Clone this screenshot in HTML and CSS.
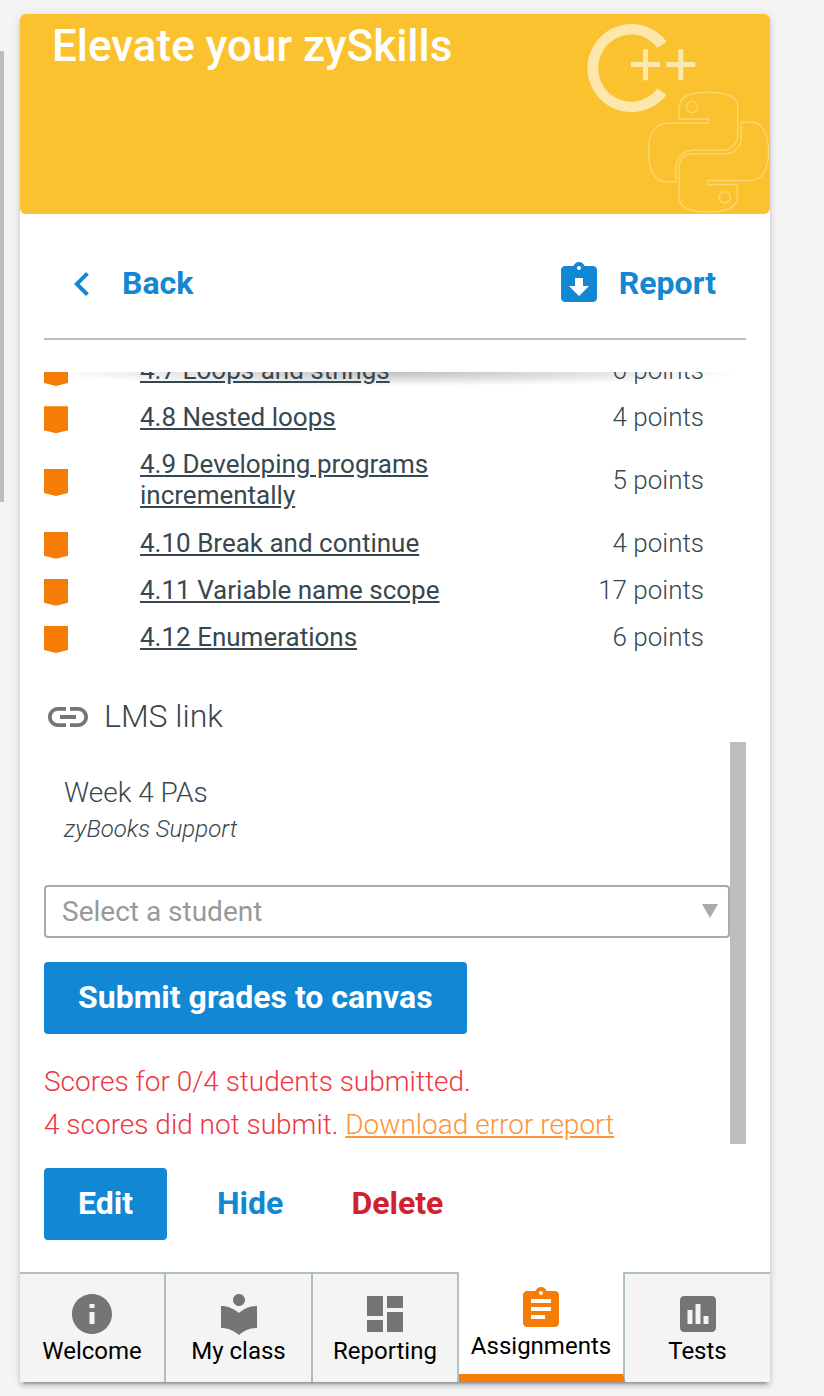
FILE: index.html
```html
<!DOCTYPE html>
<html lang="en">
<head>
  <meta charset="UTF-8">
  <meta name="viewport" content="width=device-width, initial-scale=1.0">
  <title>Assignments</title>
  <link rel="stylesheet" href="styles.css">
</head>
<body>
  <div class="page-scrollbar"></div>
  <div class="card">
    <div class="banner">
      <h1>Elevate your zySkills</h1>
      <svg class="banner-art" viewBox="560 14 210 200">
        <g fill="#fee7ac">
          <path d="M666.7 41.7A44 44 0 1 0 666.5 94.7L657.5 88.5A33 33.7 0 1 1 657.5 47.8Z"/>
          <path d="M643 49.3h5v12.7h12v5h-12v13.3h-5V67h-12v-5h12z"/>
          <path d="M678.3 49.3h5v12.7h12v5h-12v13.3h-5V67h-12v-5h12z"/>
        </g>
        <g fill="none" stroke="#fdd670" stroke-width="1.4">
          <path d="M679.3 119V107C679.3 96 692 92.3 708 92.3S737.7 96 737.7 107V135C737.7 144 731 150.3 722 150.3H694C684 150.3 675.7 158 675.7 168V181.7H665C654 181.7 648.4 168 648.4 152C648.4 135 654 123.3 667 123.3H708.7V119Z"/>
          <path d="M741.2 122.3H752C762 122.3 768.6 135 768.6 152C768.6 168 762 180.5 751 180.5H707.7V184.5H737.2V198C737.2 207 726 212 708 212S679 207 679 197V168C679 159 685 153.8 694 153.8H725C735 153.8 741.2 147 741.2 138Z"/>
          <circle cx="692" cy="107" r="5.6"/>
          <circle cx="724.7" cy="197.3" r="5.6"/>
        </g>
      </svg>
    </div>
    <div class="toolbar">
      <button class="link-button">
        <svg class="icon" viewBox="0 0 24 24"><path d="M15.41 7.41L14 6l-6 6 6 6 1.41-1.41L10.83 12z"/></svg>
        <span>Back</span>
      </button>
      <button class="link-button">
        <svg class="icon" viewBox="0 0 24 24"><path d="M19 3h-4.18C14.4 1.84 13.3 1 12 1c-1.3 0-2.4.84-2.82 2H5c-1.1 0-2 .9-2 2v14c0 1.1.9 2 2 2h14c1.1 0 2-.9 2-2V5c0-1.1-.9-2-2-2zm-7 0c.55 0 1 .45 1 1s-.45 1-1 1-1-.45-1-1 .45-1 1-1zm0 15l-5-5h3V9h4v4h3l-5 5z"/></svg>
        <span>Report</span>
      </button>
    </div>
    <div class="assignment">
      <div class="assignment-content">
        <div class="section-row"><i class="flag"></i><a>4.7 Loops and strings</a><span class="points">6 points</span></div>
        <div class="section-row"><i class="flag"></i><a>4.8 Nested loops</a><span class="points">4 points</span></div>
        <div class="section-row"><i class="flag"></i><a>4.9 Developing programs incrementally</a><span class="points">5 points</span></div>
        <div class="section-row"><i class="flag"></i><a>4.10 Break and continue</a><span class="points">4 points</span></div>
        <div class="section-row"><i class="flag"></i><a>4.11 Variable name scope</a><span class="points">17 points</span></div>
        <div class="section-row"><i class="flag"></i><a>4.12 Enumerations</a><span class="points">6 points</span></div>
        <div class="lms-title">
          <svg class="icon" viewBox="0 0 24 24"><path d="M3.9 12c0-1.71 1.39-3.1 3.1-3.1h4V7H7c-2.76 0-5 2.24-5 5s2.24 5 5 5h4v-1.9H7c-1.71 0-3.1-1.39-3.1-3.1zM8 13h8v-2H8v2zm9-6h-4v1.9h4c1.71 0 3.1 1.39 3.1 3.1s-1.39 3.1-3.1 3.1h-4V17h4c2.76 0 5-2.24 5-5s-2.24-5-5-5z"/></svg>
          <span>LMS link</span>
        </div>
        <div class="lms-info">
          <div class="lms-name">Week 4 PAs</div>
          <div class="lms-course">zyBooks Support</div>
        </div>
        <div class="student-select">
          <span>Select a student</span>
          <svg class="arrow" viewBox="0 0 16 14"><path d="M0 0h16L8 14z"/></svg>
        </div>
        <button class="button">Submit grades to canvas</button>
        <p class="error">Scores for 0/4 students submitted.<br>4 scores did not submit. <a>Download error report</a></p>
      </div>
      <div class="scrollbar"><div class="scrollbar-thumb"></div></div>
    </div>
    <div class="actions">
      <button class="button">Edit</button>
      <button class="button flat">Hide</button>
      <button class="button flat danger">Delete</button>
    </div>
    <div class="tabs">
      <div class="tab">
        <svg class="icon" viewBox="0 0 24 24"><path d="M12 2C6.48 2 2 6.48 2 12s4.48 10 10 10 10-4.48 10-10S17.52 2 12 2zm1.250 15h-2.500v-6h2.500v6zm0-8h-2.500V7h2.500v2z"/></svg>
        <span>Welcome</span>
      </div>
      <div class="tab">
        <svg class="icon" viewBox="0 0 24 24"><path d="M12 11.55C9.64 9.35 6.48 8 3 8v11c3.48 0 6.64 1.35 9 3.55 2.36-2.19 5.52-3.55 9-3.55V8c-3.48 0-6.64 1.35-9 3.55zM12 8c1.66 0 3-1.34 3-3s-1.34-3-3-3-3 1.34-3 3 1.34 3 3 3z"/></svg>
        <span>My class</span>
      </div>
      <div class="tab">
        <svg class="icon" viewBox="0 0 24 24"><path d="M3 13h8V3H3v10zm0 8h8v-6H3v6zm10 0h8V11h-8v10zm0-18v6h8V3h-8z"/></svg>
        <span>Reporting</span>
      </div>
      <div class="tab active">
        <svg class="icon" viewBox="0 0 24 24"><path d="M19 3h-4.18C14.4 1.84 13.3 1 12 1c-1.3 0-2.4.84-2.82 2H5c-1.1 0-2 .9-2 2v14c0 1.1.9 2 2 2h14c1.1 0 2-.9 2-2V5c0-1.1-.9-2-2-2zm-7 0c.55 0 1 .45 1 1s-.45 1-1 1-1-.45-1-1 .45-1 1-1zm2 14H7v-2h7v2zm3-4H7v-2h10v2zm0-4H7V7h10v2z"/></svg>
        <span>Assignments</span>
      </div>
      <div class="tab">
        <svg class="icon" viewBox="0 0 24 24"><path d="M19 3H5c-1.1 0-2 .9-2 2v14c0 1.1.9 2 2 2h14c1.1 0 2-.9 2-2V5c0-1.1-.9-2-2-2zM9.250 17H6.750v-7h2.500v7zm4 0h-2.500V7h2.500v10zm4 0h-2.500v-4h2.500v4z"/></svg>
        <span>Tests</span>
      </div>
    </div>
  </div>
</body>
</html>
```
FILE: styles.css
```css
* {
  box-sizing: border-box;
}
body {
  margin: 0;
  height: 1396px;
  padding: 14px 0 0 20px;
  background: #f4f4f4;
  font-family: Roboto, sans-serif;
  font-weight: 300;
  color: #37474f;
  overflow: hidden;
}
button {
  font-family: inherit;
  border: none;
  background: none;
  cursor: pointer;
}
.page-scrollbar {
  position: absolute;
  left: 0;
  top: 51px;
  width: 4px;
  height: 451px;
  background: #bdbdbd;
}
.icon {
  width: 48px;
  height: 48px;
  flex: none;
  fill: currentColor;
}
.card {
  width: 750px;
  height: 1368px;
  background: #fff;
  border-radius: 6px 6px 0 0;
  box-shadow: 0 4px 4px rgba(0, 0, 0, 0.14), 0 6px 2px -4px rgba(0, 0, 0, 0.2), 0 2px 10px rgba(0, 0, 0, 0.12);
}
.banner {
  height: 200px;
  display: flex;
  justify-content: space-between;
  padding-left: 32px;
  background: #fbc230;
  border-radius: 6px;
  overflow: hidden;
}
.banner h1 {
  margin: 6px 0 0;
  font-size: 44px;
  line-height: 52px;
  font-weight: 500;
  color: #fff;
}
.banner-art {
  width: 210px;
  height: 200px;
}
.toolbar {
  height: 126px;
  margin: 0 24px;
  padding: 16px 30px 0 14px;
  display: flex;
  align-items: center;
  justify-content: space-between;
  border-bottom: 2px solid #bdbdbd;
}
.link-button {
  display: flex;
  align-items: center;
  gap: 16px;
  padding: 0;
  color: #1287d3;
  font-size: 32px;
  line-height: 46px;
  font-weight: 700;
}
.link-button span {
  padding-bottom: 2px;
}
.assignment {
  height: 772px;
  margin: 32px 24px 0;
  display: flex;
  overflow: hidden;
  background: radial-gradient(farthest-side at 50% 0, rgba(0, 0, 0, 0.25), rgba(0, 0, 0, 0)) no-repeat;
  background-size: 100% 14px;
}
.assignment-content {
  width: 686px;
  margin-top: -25px;
}
.section-row {
  display: flex;
  align-items: center;
  padding: 8.1px 26px 8.1px 0;
  font-size: 26px;
  line-height: 31px;
}
.section-row a {
  width: 330px;
  margin-left: 72px;
  font-weight: 400;
  text-decoration: underline;
}
.points {
  margin-left: auto;
}
.flag {
  width: 24px;
  height: 27px;
  margin-top: 4px;
  background: #f57c06;
  clip-path: polygon(0 0, 100% 0, 100% 24px, 50% 100%, 0 24px);
}
.lms-title {
  display: flex;
  align-items: center;
  gap: 12px;
  height: 48px;
  margin-top: 31.800px;
  font-size: 32px;
  line-height: 46px;
}
.lms-title span {
  padding-bottom: 2px;
}
.lms-title .icon {
  color: #757575;
}
.lms-info {
  padding: 34px 20px 0;
  height: 144px;
}
.lms-name {
  font-size: 28px;
  line-height: 36px;
  margin-bottom: 2px;
}
.lms-course {
  font-size: 24px;
  line-height: 32px;
  font-style: italic;
}
.student-select {
  height: 53px;
  display: flex;
  align-items: center;
  justify-content: space-between;
  margin-bottom: 24px;
  padding: 0 10px 0 16px;
  border: 2px solid #aaa;
  border-radius: 4px;
  font-size: 28px;
  font-weight: 400;
  color: #999;
}
.arrow {
  width: 16px;
  height: 14px;
  margin-bottom: 1px;
  fill: #aaa;
}
.button {
  height: 72px;
  padding: 0 34px 2px;
  border-radius: 4px;
  background: #1287d3;
  color: #fff;
  font-size: 32px;
  line-height: 70px;
  font-weight: 700;
}
.error {
  margin: 26px 0 0;
  font-size: 28px;
  line-height: 43px;
  color: #f03543;
}
.error a {
  color: #fd9437;
  text-decoration: underline;
}
.scrollbar {
  width: 16px;
  display: flex;
  align-items: flex-end;
}
.scrollbar-thumb {
  width: 16px;
  height: 402px;
  background: #bdbdbd;
}
.actions {
  display: flex;
  margin: 24px 24px 32px;
}
.flat {
  margin-left: 16px;
  background: none;
  color: #1287d3;
}
.danger {
  margin-left: 0;
  color: #d2202f;
}
.tabs {
  display: grid;
  grid-template-columns: 146px 147px 146px 166px 145px;
  height: 110px;
}
.tab {
  display: flex;
  flex-direction: column;
  align-items: center;
  padding-top: 16px;
  background: #f4f4f4;
  border-top: 2px solid #b0bec5;
  border-right: 2px solid #b0bec5;
  font-size: 24px;
  line-height: 26px;
  font-weight: 400;
  color: #000;
}
.tab .icon {
  color: #757575;
}
.tab:last-child {
  border-right: none;
}
.tab.active {
  padding-top: 13px;
  background: #fff;
  border-top: none;
  border-bottom: 8px solid #f57c06;
}
.tab.active .icon {
  color: #f57c06;
}
```
